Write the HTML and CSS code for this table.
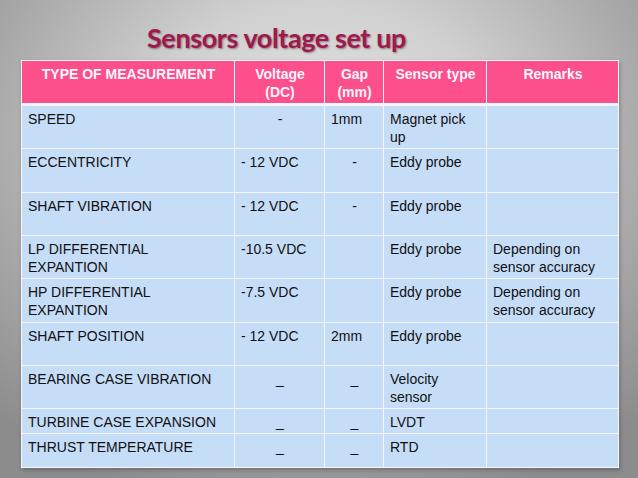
FILE: index.html
```html
<!DOCTYPE html>
<html>
<head>
<meta charset="utf-8">
<link rel="stylesheet" href="styles.css">
</head>
<body>
<div class="slide">
  <h1 class="title">Sensors voltage set up</h1>
  <table class="sensors">
    <colgroup>
      <col class="c-type"><col class="c-volt"><col class="c-gap"><col class="c-sensor"><col class="c-rem">
    </colgroup>
    <thead>
      <tr class="r-head">
        <th>TYPE OF MEASUREMENT</th>
        <th>Voltage<br>(DC)</th>
        <th>Gap<br>(mm)</th>
        <th>Sensor type</th>
        <th>Remarks</th>
      </tr>
    </thead>
    <tbody>
      <tr class="r-44">
        <td>SPEED</td><td class="center">-</td><td>1mm</td><td>Magnet pick<br>up</td><td></td>
      </tr>
      <tr class="r-44">
        <td>ECCENTRICITY</td><td>- 12 VDC</td><td class="center">-</td><td>Eddy probe</td><td></td>
      </tr>
      <tr class="r-43">
        <td>SHAFT VIBRATION</td><td>- 12 VDC</td><td class="center">-</td><td>Eddy probe</td><td></td>
      </tr>
      <tr class="r-43">
        <td>LP DIFFERENTIAL<br>EXPANTION</td><td>-10.5 VDC</td><td></td><td>Eddy probe</td><td>Depending on<br>sensor accuracy</td>
      </tr>
      <tr class="r-44">
        <td>HP DIFFERENTIAL<br>EXPANTION</td><td>-7.5 VDC</td><td></td><td>Eddy probe</td><td>Depending on<br>sensor accuracy</td>
      </tr>
      <tr class="r-43">
        <td>SHAFT POSITION</td><td>- 12 VDC</td><td>2mm</td><td>Eddy probe</td><td></td>
      </tr>
      <tr class="r-43">
        <td>BEARING CASE VIBRATION</td><td class="center">_</td><td class="center">_</td><td>Velocity<br>sensor</td><td></td>
      </tr>
      <tr class="r-25">
        <td>TURBINE CASE EXPANSION</td><td class="center">_</td><td class="center">_</td><td>LVDT</td><td></td>
      </tr>
      <tr class="r-34">
        <td>THRUST TEMPERATURE</td><td class="center">_</td><td class="center">_</td><td>RTD</td><td></td>
      </tr>
    </tbody>
  </table>
</div>
</body>
</html>
```

FILE: styles.css
```css
html, body {
  margin: 0;
  padding: 0;
}

body {
  width: 638px;
  height: 478px;
  overflow: hidden;
  background: radial-gradient(ellipse 75% 80% at 50% 28%, #e4e4e4 0%, #d0d0d0 35%, #a8a8a8 70%, #8c8c8c 100%);
}

.slide {
  display: flex;
  flex-direction: column;
  padding: 21px 0 0 21px;
}

.title {
  margin: 0 0 0 126px;
  font-family: Lato, "Liberation Sans", sans-serif;
  font-weight: 700;
  font-size: 27px;
  line-height: 34px;
  height: 39px;
  letter-spacing: -0.4px;
  color: #9d1a4c;
  text-shadow: 1px 1px 2px rgba(60, 0, 20, 0.45);
}

.sensors {
  width: 597px;
  table-layout: fixed;
  border-collapse: collapse;
  border: 1px solid #f4f4f8;
  font-family: "Liberation Sans", Arial, sans-serif;
  font-size: 14px;
  line-height: 18px;
  color: #111;
  box-shadow: 1px 2px 4px rgba(0, 0, 0, 0.25);
}

.c-type { width: 213px; }
.c-volt { width: 90px; }
.c-gap { width: 59px; }
.c-sensor { width: 103px; }
.c-rem { width: 132px; }

.sensors th,
.sensors td {
  border: 1px solid #f4f6fb;
  vertical-align: top;
  padding: 4px 5px 0 6px;
}

.sensors th {
  background: #fd4f8c;
  color: #fff6fa;
  font-weight: 700;
  text-align: center;
  padding-top: 4px;
  border-bottom: 3px solid #f6f6fa;
}

.sensors td {
  background: #c6ddf8;
  text-align: left;
}

.sensors td.center {
  text-align: center;
}

.r-head { height: 44px; }
.r-44 { height: 44px; }
.r-43 { height: 43px; }
.r-25 { height: 25px; }
.r-34 { height: 34px; }
```
